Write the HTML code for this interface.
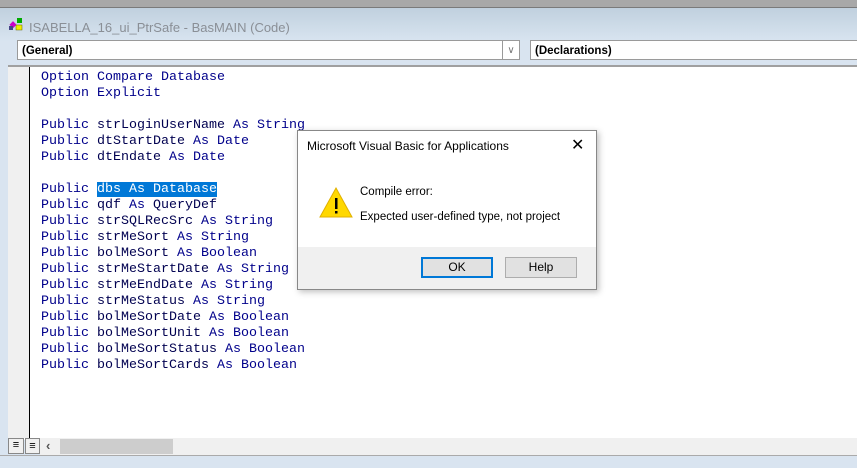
<!DOCTYPE html>
<html><head><style>
body{margin:0;width:857px;height:467px;overflow:hidden;position:relative;background:#d9e4f0;font-family:"Liberation Sans",sans-serif}
.abs{position:absolute}
#top{left:0;top:0;width:857px;height:7px;background:#a8a8a8}
#title{left:0;top:7px;width:857px;height:33px;background:linear-gradient(#c0d0de,#d8e4f0);border-top:1px solid #7a7a7a}
#title span{position:absolute;left:29px;top:12px;font-size:13px;color:#8a8f96}
.combo{background:#fff;border:1px solid #9a9a9a;height:20px;top:40px;font-size:11.5px;font-weight:bold;line-height:20px;box-sizing:border-box;padding-left:4px}
#code{left:8px;top:65px;width:849px;height:375px;background:#fff;border-top:2px solid #a0a0a0;box-sizing:border-box}
#gutter{left:8px;top:67px;width:21px;height:371px;background:#f0f0f0;border-right:1px solid #000}
pre{position:absolute;left:41px;top:70px;margin:0;font-family:"Liberation Mono",monospace;font-size:13.33px;line-height:16px;color:#000050}
.k{color:#00008b}
.sel{background:#0078d7;color:#fff}
#sb{left:40px;top:438px;width:817px;height:17px;background:#f0f0f0}
#dlg{left:297px;top:130px;width:298px;height:158px;background:#fff;border:1px solid #888;box-shadow:2px 2px 6px rgba(0,0,0,.25)}
.btn{position:absolute;top:126px;width:72px;height:21px;box-sizing:border-box;background:#e1e1e1;border:1px solid #adadad;font-size:12px;text-align:center;line-height:19px}
</style></head><body>
<div id="top" class="abs"></div>
<div id="title" class="abs">
<svg class="abs" style="left:9px;top:9px" width="16" height="16"><rect x="2" y="5" width="5" height="5" fill="#c0c" transform="rotate(45 4 7)"/><rect x="8" y="1" width="5" height="5" fill="#0a0"/><rect x="7" y="8" width="6" height="5" fill="#ee0" stroke="#660" stroke-width=".5"/><rect x="0" y="9" width="4" height="4" fill="#448"/></svg>
<span>ISABELLA_16_ui_PtrSafe - BasMAIN (Code)</span></div>
<div class="abs combo" style="left:17px;width:503px">(General)<span style="position:absolute;right:0;top:0;width:16px;height:18px;border-left:1px solid #9a9a9a;font-weight:normal;color:#777;text-align:center;font-size:10px">&#8744;</span></div>
<div class="abs combo" style="left:530px;width:330px">(Declarations)</div>
<div id="code" class="abs"></div>
<div id="gutter" class="abs"></div>
<pre><span class="k">Option Compare Database</span>
<span class="k">Option Explicit</span>

<span class="k">Public</span> strLoginUserName <span class="k">As String</span>
<span class="k">Public</span> dtStartDate <span class="k">As Date</span>
<span class="k">Public</span> dtEndate <span class="k">As Date</span>

<span class="k">Public</span> <span class="sel">dbs As Database</span>
<span class="k">Public</span> qdf <span class="k">As</span> QueryDef
<span class="k">Public</span> strSQLRecSrc <span class="k">As String</span>
<span class="k">Public</span> strMeSort <span class="k">As String</span>
<span class="k">Public</span> bolMeSort <span class="k">As Boolean</span>
<span class="k">Public</span> strMeStartDate <span class="k">As String</span>
<span class="k">Public</span> strMeEndDate <span class="k">As String</span>
<span class="k">Public</span> strMeStatus <span class="k">As String</span>
<span class="k">Public</span> bolMeSortDate <span class="k">As Boolean</span>
<span class="k">Public</span> bolMeSortUnit <span class="k">As Boolean</span>
<span class="k">Public</span> bolMeSortStatus <span class="k">As Boolean</span>
<span class="k">Public</span> bolMeSortCards <span class="k">As Boolean</span></pre>
<div id="sb" class="abs"><div class="abs" style="left:20px;top:1px;width:113px;height:15px;background:#cdcdcd"></div><span class="abs" style="left:6px;top:0;font-size:13px;color:#555;font-weight:bold">&#8249;</span></div>
<div class="abs" style="left:8px;top:438px;width:16px;height:16px;border:1px solid #888;box-sizing:border-box;background:#f0f0f0;font-size:11px;line-height:12px;text-align:center">&#8801;</div>
<div class="abs" style="left:25px;top:438px;width:15px;height:16px;border:1px solid #888;box-sizing:border-box;background:#f0f0f0;font-size:11px;line-height:14px;text-align:center">&#8801;</div>
<div class="abs" style="left:0;top:455px;width:857px;height:12px;background:#d9e4f0;border-top:1px solid #aaa"></div>
<div id="dlg" class="abs">
<div class="abs" style="left:9px;top:8px;font-size:12px;color:#000">Microsoft Visual Basic for Applications</div>
<div class="abs" style="left:273px;top:4px;font-size:16px">&#x2715;</div>
<svg class="abs" style="left:21px;top:55px" width="34" height="34"><polygon points="17,2 33,31 1,31" fill="#ffd800" stroke="#e0b000"/><rect x="16" y="12" width="2.5" height="11" fill="#000"/><rect x="16" y="25" width="2.5" height="2.5" fill="#000"/></svg>
<div class="abs" style="left:62px;top:55px;font-size:11.5px">Compile error:</div>
<div class="abs" style="left:62px;top:80px;font-size:11.5px">Expected user-defined type, not project</div>
<div class="abs" style="left:0;top:116px;width:298px;height:42px;background:#f0f0f0"></div>
<div class="btn" style="left:123px;border:2px solid #0078d7;line-height:17px">OK</div>
<div class="btn" style="left:207px">Help</div>
</div>
</body></html>
